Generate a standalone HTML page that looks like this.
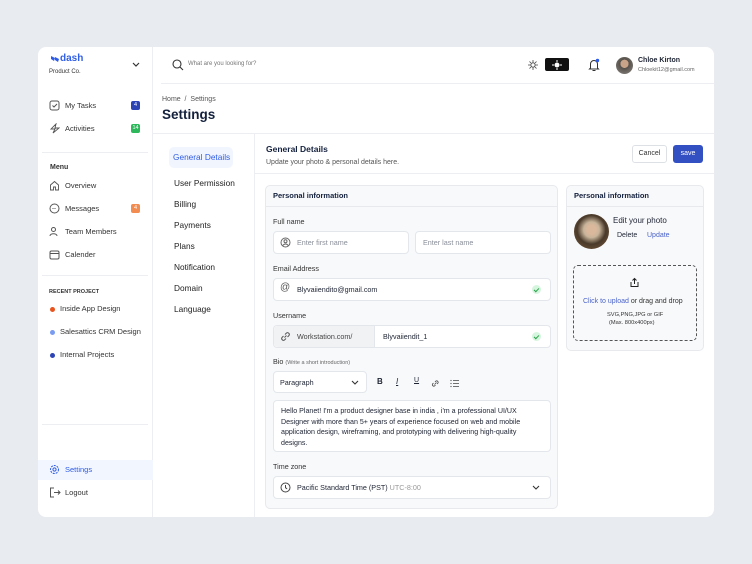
<!DOCTYPE html>
<html><head><meta charset="utf-8"><style>
*{box-sizing:border-box;margin:0;padding:0}
body{width:752px;height:564px;background:#e8ebf0;font-family:"Liberation Sans",sans-serif;color:#1e2433;position:relative;overflow:hidden;font-size:7px}
.a{position:absolute}
.card{left:38px;top:47px;width:676px;height:470px;background:#fff;border-radius:8px;overflow:hidden}
.t{position:absolute;white-space:nowrap}
.side .t{font-size:7.5px;color:#333}
.badge{position:absolute;width:9px;height:9px;border-radius:2px;color:#fff;font-size:5.5px;text-align:center;line-height:9px}
.hr{position:absolute;height:1px;background:#eceef2}
.in{position:absolute;background:#fff;border:1px solid #e3e6eb;border-radius:4px;height:23px}
.ph{color:#8a8f99}
.chk{position:absolute;width:9px;height:9px;border-radius:50%;background:#d6f5df}
.chk:after{content:"";position:absolute;left:3px;top:1.5px;width:2px;height:4px;border:solid #2aa34a;border-width:0 1.2px 1.2px 0;transform:rotate(45deg)}
svg{position:absolute}
.nav{font-size:8.3px;color:#222}
.lb{font-size:7.2px;color:#333}
.iv{font-size:7.2px}
</style></head><body>
<div class="a card">
 <div class="a side" style="left:0;top:0;width:115px;height:470px;border-right:1px solid #eceef2">
  <svg style="left:12px;top:8px" width="10" height="8" viewBox="0 0 10 8"><path d="M1 1l4 2-1 3-3-2z M5 2l4 2-1 3-3-2z" fill="#2e5ce6"/></svg>
  <div class="t" style="left:22px;top:6px;font-size:10px;font-weight:bold;color:#2f5ee8">dash</div>
  <div class="t" style="left:11px;top:22px;font-size:6px;color:#333">Product Co.</div>
  <svg style="left:94px;top:15px" width="8" height="6"><path d="M1 1l3 3 3-3" stroke="#333" fill="none" stroke-width="1.2"/></svg>
  <svg style="left:11px;top:53px" width="11" height="11"><rect x="1" y="1" width="9" height="9" rx="2" stroke="#555" fill="none"/><path d="M3.5 5.5l1.5 1.5 3-3" stroke="#555" fill="none"/></svg>
  <div class="t" style="left:27px;top:54px">My Tasks</div><div class="badge" style="left:93px;top:54px;background:#2d44b5">4</div>
  <svg style="left:11px;top:76px" width="11" height="11"><path d="M7 1L2 6h4l-2 4 6-5H6z" stroke="#555" fill="none" stroke-width=".9"/></svg>
  <div class="t" style="left:27px;top:77px">Activities</div><div class="badge" style="left:93px;top:77px;background:#2eb85c">14</div>
  <div class="hr" style="left:4px;top:105px;width:106px"></div>
  <div class="t" style="left:12px;top:117px;font-weight:bold;font-size:7px">Menu</div>
  <svg style="left:11px;top:133px" width="11" height="11"><path d="M1.5 5L5.5 1.5 9.5 5v5h-3V7h-2v3h-3z" stroke="#555" fill="none" stroke-width=".9"/></svg>
  <div class="t" style="left:27px;top:134px">Overview</div>
  <svg style="left:11px;top:156px" width="11" height="11"><circle cx="5.5" cy="5.5" r="4.5" stroke="#555" fill="none"/><path d="M3.5 5.5h4" stroke="#555" stroke-dasharray="1 1"/></svg>
  <div class="t" style="left:27px;top:157px">Messages</div><div class="badge" style="left:93px;top:157px;background:#f28c50">4</div>
  <svg style="left:11px;top:179px" width="11" height="11"><circle cx="4.5" cy="3.5" r="2" stroke="#555" fill="none"/><path d="M1 10c0-3 7-3 7 0" stroke="#555" fill="none"/></svg>
  <div class="t" style="left:27px;top:180px">Team Members</div>
  <svg style="left:11px;top:202px" width="11" height="11"><rect x="1" y="2" width="9" height="8" rx="1.5" stroke="#555" fill="none"/><path d="M1 4.5h9" stroke="#555"/></svg>
  <div class="t" style="left:27px;top:203px">Calender</div>
  <div class="hr" style="left:4px;top:228px;width:106px"></div>
  <div class="t" style="left:11px;top:242px;font-size:5.5px;font-weight:bold;color:#333">RECENT PROJECT</div>
  <div class="a" style="left:12px;top:260px;width:5px;height:5px;border-radius:50%;background:#e8541e"></div><div class="t" style="left:22px;top:257px">Inside App Design</div>
  <div class="a" style="left:12px;top:283px;width:5px;height:5px;border-radius:50%;background:#7a9cf0"></div><div class="t" style="left:22px;top:280px">Salesattics CRM Design</div>
  <div class="a" style="left:12px;top:306px;width:5px;height:5px;border-radius:50%;background:#2d44b5"></div><div class="t" style="left:22px;top:303px">Internal Projects</div>
  <div class="hr" style="left:4px;top:377px;width:106px"></div>
  <div class="a" style="left:0;top:413px;width:115px;height:20px;background:#f2f6ff"></div>
  <svg style="left:11px;top:417px" width="11" height="11"><circle cx="5.5" cy="5.5" r="4" stroke="#2e5ce6" fill="none" stroke-dasharray="2 1"/><circle cx="5.5" cy="5.5" r="1.6" stroke="#2e5ce6" fill="none"/></svg>
  <div class="t" style="left:27px;top:418px;color:#2e5ce6">Settings</div>
  <svg style="left:11px;top:440px" width="12" height="11"><path d="M5 1H1.5v9H5M5 5.5h6M9 3.5l2 2-2 2" stroke="#555" fill="none"/></svg>
  <div class="t" style="left:27px;top:441px">Logout</div>
 </div>
 <svg style="left:134px;top:12px" width="12" height="12"><circle cx="5" cy="5" r="4" stroke="#333" fill="none" stroke-width="1.1"/><path d="M8 8l3 3" stroke="#333" stroke-width="1.1"/></svg>
 <div class="t" style="left:150px;top:14px;font-size:6px;color:#777">What are you looking for?</div>
 <svg style="left:490px;top:13px" width="10" height="10"><circle cx="5" cy="5" r="2.2" stroke="#444" fill="none"/><path d="M5 0v2M5 8v2M0 5h2M8 5h2M1.5 1.5l1.3 1.3M7.2 7.2l1.3 1.3M1.5 8.5l1.3-1.3M7.2 2.8l1.3-1.3" stroke="#444" stroke-width=".8"/></svg>
 <div class="a" style="left:507px;top:11px;width:24px;height:13px;background:#111;border-radius:2px"></div>
 <svg style="left:514px;top:13px" width="10" height="10"><circle cx="5" cy="5" r="2.5" fill="#fff"/><path d="M5 0v2M5 8v2M0 5h2M8 5h2" stroke="#fff" stroke-width="1"/></svg>
 <svg style="left:550px;top:11px" width="12" height="14"><path d="M2.5 10V6a3.5 3.5 0 017 0v4l1 1H1.5z M4.5 12.5h3" stroke="#333" fill="none"/><circle cx="9.5" cy="2.5" r="1.7" fill="#2e5ce6"/></svg>
 <div class="a" style="left:578px;top:10px;width:17px;height:17px;border-radius:50%;background:radial-gradient(circle at 50% 40%,#c9a488 30%,#55504a 32%,#8a8580)"></div>
 <div class="t" style="left:600px;top:10px;font-size:7px;font-weight:bold">Chloe Kirton</div>
 <div class="t" style="left:600px;top:20px;font-size:5.5px;color:#666">Chloekit12@gmail.com</div>
 <div class="hr" style="left:123px;top:36px;width:553px"></div>
 <div class="t" style="left:124px;top:49px;font-size:7px;color:#555">Home&nbsp; /&nbsp; Settings</div>
 <div class="t" style="left:124px;top:60px;font-size:13.5px;font-weight:bold;color:#14213d">Settings</div>
 <div class="hr" style="left:115px;top:86px;width:561px"></div>
 <div class="a" style="left:216px;top:87px;width:1px;height:383px;background:#eceef2"></div>
 <div class="a" style="left:131px;top:100px;width:64px;height:21px;background:#f1f5fe;border-radius:5px"></div>
 <div class="t nav" style="left:135px;top:105px;color:#2e5ce6">General Details</div>
 <div class="t nav" style="left:136px;top:131px">User Permission</div>
 <div class="t nav" style="left:136px;top:152px">Billing</div>
 <div class="t nav" style="left:136px;top:173px">Payments</div>
 <div class="t nav" style="left:136px;top:194px">Plans</div>
 <div class="t nav" style="left:136px;top:215px">Notification</div>
 <div class="t nav" style="left:136px;top:236px">Domain</div>
 <div class="t nav" style="left:136px;top:257px">Language</div>
 <div class="t" style="left:228px;top:97px;font-size:8.5px;font-weight:bold;color:#14213d">General Details</div>
 <div class="t" style="left:228px;top:112px;font-size:7px;color:#555">Update your photo &amp; personal details here.</div>
 <div class="a" style="left:594px;top:98px;width:35px;height:18px;border:1px solid #dde0e5;border-radius:3px;font-size:7px;text-align:center;line-height:16px;color:#333">Cancel</div>
 <div class="a" style="left:635px;top:98px;width:30px;height:18px;background:#3350c3;border-radius:3px;font-size:7px;text-align:center;line-height:18px;color:#fff">save</div>
 <div class="hr" style="left:217px;top:126px;width:459px"></div>
 <div class="a" style="left:227px;top:138px;width:293px;height:324px;background:#f8f9fb;border:1px solid #e7e9ed;border-radius:5px">
  <div class="t" style="left:7px;top:5px;font-size:7.5px;font-weight:bold;color:#14213d">Personal information</div>
  <div class="hr" style="left:0;top:20px;width:291px;background:#e7e9ed"></div>
  <div class="t lb" style="left:7px;top:31px">Full name</div>
  <div class="in" style="left:7px;top:45px;width:136px"></div>
  <svg style="left:14px;top:51px" width="11" height="11"><circle cx="5.5" cy="5.5" r="4.5" stroke="#666" fill="none"/><circle cx="5.5" cy="4.3" r="1.5" stroke="#666" fill="none"/><path d="M2.8 8.5c1.5-2 4-2 5.4 0" stroke="#666" fill="none"/></svg>
  <div class="t ph iv" style="left:31px;top:52px">Enter first name</div>
  <div class="in" style="left:149px;top:45px;width:136px"></div>
  <div class="t ph iv" style="left:157px;top:52px">Enter last name</div>
  <div class="t lb" style="left:7px;top:78px">Email Address</div>
  <div class="in" style="left:7px;top:92px;width:278px"></div>
  <div class="t" style="left:14px;top:96px;font-size:10px;color:#555">@</div>
  <div class="t iv" style="left:31px;top:99px">Blyvaiiendito@gmail.com</div>
  <div class="chk" style="left:266px;top:99px"></div>
  <div class="t lb" style="left:7px;top:125px">Username</div>
  <div class="in" style="left:7px;top:139px;width:278px"></div>
  <div class="a" style="left:8px;top:140px;width:101px;height:21px;background:#f1f2f4;border-right:1px solid #e3e6eb;border-radius:4px 0 0 4px"></div>
  <svg style="left:14px;top:145px" width="11" height="11"><path d="M4.5 6.5l2-2M3.5 5L2 6.5a1.8 1.8 0 002.5 2.5L6 7.5M7.5 6L9 4.5A1.8 1.8 0 006.5 2L5 3.5" stroke="#555" fill="none"/></svg>
  <div class="t iv" style="left:31px;top:146px;color:#444">Workstation.com/</div>
  <div class="t iv" style="left:117px;top:146px">Blyvaiiendit_1</div>
  <div class="chk" style="left:266px;top:146px"></div>
  <div class="t lb" style="left:7px;top:171px">Bio <span style="font-size:5.5px;color:#666">(Write a short introduction)</span></div>
  <div class="in" style="left:7px;top:185px;width:94px;height:22px"></div>
  <div class="t iv" style="left:14px;top:192px">Paragraph</div>
  <svg style="left:85px;top:194px" width="8" height="6"><path d="M1 1l3 3 3-3" stroke="#333" fill="none" stroke-width="1.1"/></svg>
  <div class="t" style="left:111px;top:191px;font-size:8px;font-weight:bold">B</div>
  <div class="t" style="left:130px;top:191px;font-size:8px;font-style:italic;text-decoration:underline">I</div>
  <div class="t" style="left:148px;top:191px;font-size:7px;text-decoration:underline">U</div>
  <svg style="left:165px;top:193px" width="9" height="9"><path d="M3.5 5.5l2-2M2.5 4L1.5 5a1.5 1.5 0 002 2L4.5 6M6 5l1-1A1.5 1.5 0 005 2L4 3" stroke="#444" fill="none" stroke-width=".8"/></svg>
  <svg style="left:184px;top:193px" width="9" height="9"><path d="M3 1.5h6M3 4.5h6M3 7.5h6" stroke="#444" stroke-width=".8"/><circle cx="1" cy="1.5" r=".6" fill="#444"/><circle cx="1" cy="4.5" r=".6" fill="#444"/><circle cx="1" cy="7.5" r=".6" fill="#444"/></svg>
  <div class="in" style="left:7px;top:214px;width:278px;height:52px;padding:5px 7px;font-size:7.1px;line-height:10.5px;white-space:normal">Hello Planet! I'm a product designer base in india , i'm a professional UI/UX Designer with more than 5+ years of experience focused on web and mobile application design, wireframing, and prototyping with delivering high-quality designs.</div>
  <div class="t lb" style="left:7px;top:276px">Time zone</div>
  <div class="in" style="left:7px;top:290px;width:278px"></div>
  <svg style="left:14px;top:296px" width="11" height="11"><circle cx="5.5" cy="5.5" r="4.5" stroke="#444" fill="none"/><path d="M5.5 3v2.7l1.6 1.2" stroke="#444" fill="none"/></svg>
  <div class="t iv" style="left:31px;top:297px">Pacific Standard Time (PST) <span style="color:#999">UTC-8:00</span></div>
  <svg style="left:266px;top:299px" width="8" height="6"><path d="M1 1l3 3 3-3" stroke="#333" fill="none" stroke-width="1.1"/></svg>
 </div>
 <div class="a" style="left:528px;top:138px;width:138px;height:166px;background:#f8f9fb;border:1px solid #e7e9ed;border-radius:5px">
  <div class="t" style="left:7px;top:5px;font-size:7.5px;font-weight:bold;color:#14213d">Personal information</div>
  <div class="hr" style="left:0;top:20px;width:136px;background:#e7e9ed"></div>
  <div class="a" style="left:7px;top:28px;width:35px;height:35px;border-radius:50%;background:radial-gradient(circle at 50% 45%,#d9b89c 18%,#c8b49a 30%,#4a3a2a 55%,#7a5a3a)"></div>
  <div class="t" style="left:46px;top:30px;font-size:8px">Edit your photo</div>
  <div class="t" style="left:50px;top:46px;font-size:7px">Delete</div>
  <div class="t" style="left:80px;top:46px;font-size:7px;color:#4a63c9">Update</div>
  <div class="a" style="left:6px;top:79px;width:124px;height:76px;border:1px dashed #555;border-radius:5px"></div>
  <svg style="left:62px;top:91px" width="11" height="11"><path d="M5.5 7V1.5M3.5 3.5l2-2 2 2M2 5v4.5h7V5" stroke="#222" fill="none"/></svg>
  <div class="t" style="left:16px;top:112px;font-size:7px;color:#333"><span style="color:#4a63c9">Click to upload</span> or drag and drop</div>
  <div class="t" style="left:40px;top:126px;font-size:5.7px;color:#333">SVG,PNG,JPG or GIF</div>
  <div class="t" style="left:42px;top:134px;font-size:5.7px;color:#333">(Max. 800x400px)</div>
 </div>
</div>
</body></html>
